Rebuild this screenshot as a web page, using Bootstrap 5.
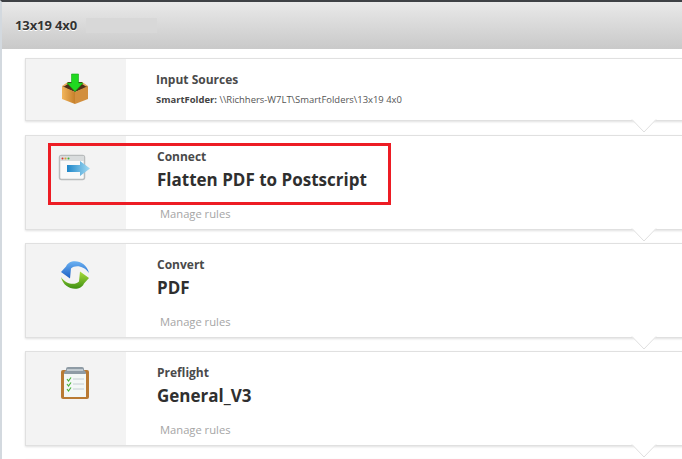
<!DOCTYPE html>
<html lang="en">
<head>
<meta charset="utf-8">
<title>Workflow</title>
<link href="https://cdn.jsdelivr.net/npm/bootstrap@5.3.0/dist/css/bootstrap.min.css" rel="stylesheet">
<style>
html,body{height:100%;overflow:hidden;background:#fff}
body{font-family:"Open Sans","Liberation Sans",sans-serif;color:#444}
.app-frame{height:459px;overflow:hidden;border-left:2px solid #d3d9df;border-top:2px solid #3e4145;position:relative}
.app-head{height:47px;background:linear-gradient(#e9e9e9,#c9c9c9);padding:0 0 0 13px;color:#333;font-size:13px;font-weight:700;letter-spacing:-.1px;text-shadow:0 1px 0 #fff}
.smudge{width:71px;height:15px;margin-left:9px;background:#d8d8d8}
.flow{padding:9px 0 0 23px;margin-right:-20px}
.step{height:63px;margin-bottom:14px;border:1px solid #e0e0e0;border-right:0;box-shadow:0 1px 2px rgba(0,0,0,.12);position:relative;background:#fff}
.step.tall{height:95px;margin-bottom:13px}
.step-side{width:100px;background:#f3f3f3;flex:none}
.step-side svg{display:block}
.ico-box{margin:13px 0 0 33px}
.ico-conn{margin:18px 0 0 32px}
.ico-conv{margin:16px 0 0 34px}
.ico-clip{margin:14px 0 0 34px}
.step-main{padding:13px 0 0 31px}
.step-main.first{padding-left:30px}
.step-kind{font-size:12px;font-weight:700;line-height:15px;color:#4a4a4a}
.step-name{font-size:17px;font-weight:700;line-height:24px;color:#2f2f2f;margin-top:4px}
.step-path{font-size:9.45px;line-height:12px;margin-top:7px;color:#555;white-space:nowrap}
.step-path b{color:#444}
.step-link{font-size:11.2px;line-height:16px;color:#a5a5a5;margin:14px 0 0 3px;text-decoration:none;display:block}
.notch{position:absolute;left:606px;bottom:-13px;width:24px;height:13px;overflow:visible}
.markup{position:absolute;left:46px;top:141px;width:343px;height:62px;border:3px solid #ed1c24}
</style>
</head>
<body>
<div class="app-frame">
  <div class="app-head d-flex align-items-center"><span>13x19 4x0</span><span class="smudge"></span></div>
  <div class="flow">

    <div class="step d-flex">
      <div class="step-side"><svg class="ico-box" width="30" height="32" viewBox="0 0 30 32"><defs><linearGradient id="bx" x1="0" x2="1" y1="0" y2="0"><stop offset="0" stop-color="#f2b65c"/><stop offset="1" stop-color="#c67f2b"/></linearGradient></defs><path d="M3 15 9 10H23L29 15 16 20Z" fill="#4d3018"/><path d="M3 14 16 20V32L3 27Z" fill="url(#bx)"/><path d="M29 14 16 20V32L29 27Z" fill="#d28f3e"/><path d="M3 14 9 10V12L5 14.500ZM29 14 23 10V12L27 14.500Z" fill="#e9ae62"/><path d="M12.500 2H19.500V11H24L16 19.500 8 11H12.500Z" fill="#20d820" stroke="#14a814" stroke-width=".6"/></svg></div>
      <div class="step-main first">
        <div class="step-kind">Input Sources</div>
        <div class="step-path"><b>SmartFolder:</b> \\Richhers-W7LT\SmartFolders\13x19 4x0</div>
      </div>
      <svg class="notch" viewBox="0 0 24 13"><path d="M0 -1.500H24V0L12 12 0 0Z" fill="#fff"/><path d="M0 -.500 12 12 24 -.500" fill="none" stroke="#e0e0e0"/></svg>
    </div>

    <div class="step tall d-flex">
      <div class="step-side"><svg class="ico-conn" width="34" height="28" viewBox="0 0 34 28"><rect x="1.500" y="1.500" width="25" height="24" rx="2" fill="#f9f9f9" stroke="#b9bcbd" stroke-width="1.500"/><rect x="2" y="2" width="24" height="5" fill="#d9dcdd"/><circle cx="4.500" cy="4.500" r="1" fill="#d8352f"/><circle cx="7.500" cy="4.500" r="1" fill="#d8a52f"/><circle cx="10.500" cy="4.500" r="1" fill="#3caf3c"/><defs><linearGradient id="ar" x1="0" x2="1" y1="0" y2="0"><stop offset="0" stop-color="#1e86c9"/><stop offset="1" stop-color="#a5dcf3"/></linearGradient></defs><path d="M9 11H22V7L32 14.500 22 22V18H9Z" fill="url(#ar)"/></svg></div>
      <div class="step-main">
        <div class="step-kind">Connect</div>
        <div class="step-name">Flatten PDF to Postscript</div>
        <a class="step-link" href="#">Manage rules</a>
      </div>
      <svg class="notch" viewBox="0 0 24 13"><path d="M0 -1.500H24V0L12 12 0 0Z" fill="#fff"/><path d="M0 -.500 12 12 24 -.500" fill="none" stroke="#e0e0e0"/></svg>
    </div>

    <div class="step tall d-flex">
      <div class="step-side"><svg class="ico-conv" width="30" height="30" viewBox="0 0 30 30"><defs><linearGradient id="bl" x1="0" x2="0" y1="0" y2="1"><stop offset="0" stop-color="#6cb2f2"/><stop offset="1" stop-color="#1a5fc4"/></linearGradient><linearGradient id="gr" x1="0" x2="0" y1="0" y2="1"><stop offset="0" stop-color="#3f8f12"/><stop offset="1" stop-color="#a8dc3c"/></linearGradient></defs><path d="M29 13C27 4 19 0 12 1.500 9 2.500 7 4 6 6.500L1 12 10 18.500 11 8.500C15 4.500 24 5.500 29 13Z" fill="url(#bl)"/><path transform="rotate(180 15 15)" d="M29 13C27 4 19 0 12 1.500 9 2.500 7 4 6 6.500L1 12 10 18.500 11 8.500C15 4.500 24 5.500 29 13Z" fill="url(#gr)"/></svg></div>
      <div class="step-main">
        <div class="step-kind">Convert</div>
        <div class="step-name">PDF</div>
        <a class="step-link" href="#">Manage rules</a>
      </div>
      <svg class="notch" viewBox="0 0 24 13"><path d="M0 -1.500H24V0L12 12 0 0Z" fill="#fff"/><path d="M0 -.500 12 12 24 -.500" fill="none" stroke="#e0e0e0"/></svg>
    </div>

    <div class="step tall d-flex">
      <div class="step-side"><svg class="ico-clip" width="30" height="33" viewBox="0 0 30 33"><rect x="1" y="4" width="28" height="29" rx="2" fill="#b97a33"/><rect x="4" y="7" width="22" height="24" fill="#f3f7f6"/><path d="M6 3Q6 1 8 1H22Q24 1 24 3V4Q26 5 26 8H4Q4 5 6 4Z" fill="#8e9ba5"/><path d="M7 3H23V5H7Z" fill="#c1cad0"/><path d="M13 13H24M13 18H24M13 23H24" stroke="#c4ced2"/><path d="M7 13 8.500 15 11 11.500M7 18 8.500 20 11 16.500M7 23 8.500 25 11 21.500" fill="none" stroke="#4ab33c" stroke-width="1.200"/></svg></div>
      <div class="step-main">
        <div class="step-kind">Preflight</div>
        <div class="step-name">General_V3</div>
        <a class="step-link" href="#">Manage rules</a>
      </div>
      <svg class="notch" viewBox="0 0 24 13"><path d="M0 -1.500H24V0L12 12 0 0Z" fill="#fff"/><path d="M0 -.500 12 12 24 -.500" fill="none" stroke="#e0e0e0"/></svg>
    </div>

    <div class="step"></div>
  </div>
  <div class="markup"></div>
</div>
<script src="https://cdn.jsdelivr.net/npm/bootstrap@5.3.0/dist/js/bootstrap.bundle.min.js"></script>
</body>
</html>
